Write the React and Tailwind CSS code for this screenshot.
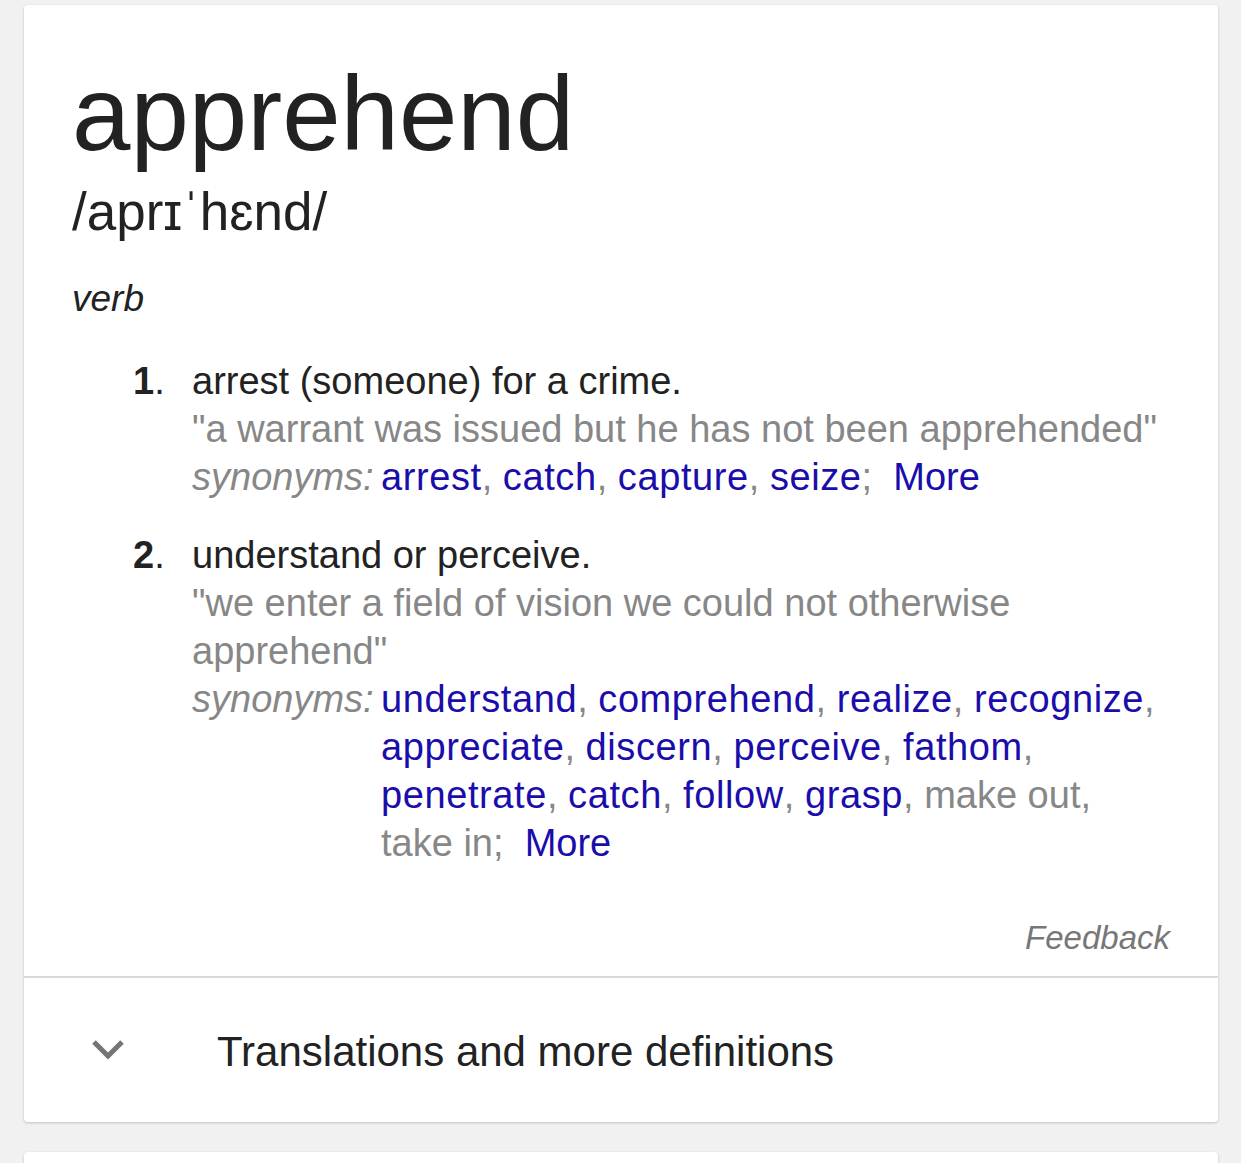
import { useState } from 'react';

const LINK = 'text-[#1a0dab] tracking-[0.6px]';

const Syn = ({ words, last }) => (
  <>
    {words.map((w, i) => (
      <span key={w}>
        <a href="#" className={LINK}>{w}</a>
        {i < words.length - 1 || !last ? <span className="text-[#878787]">, </span> : null}
      </span>
    ))}
  </>
);

const Definition = ({ n, text, example, children }) => (
  <div className="flex">
    <div className="w-[59px] shrink-0 text-[#222]">
      <span className="font-bold">{n}</span>.
    </div>
    <div className="flex-1 min-w-0">
      <div className="text-[#222]">{text}</div>
      <div className="text-[#878787]">{example}</div>
      <div className="flex">
        <span className="w-[189px] shrink-0 italic text-[#878787] whitespace-nowrap">synonyms:</span>
        <div className="flex-1 min-w-0">{children}</div>
      </div>
    </div>
  </div>
);

export default function App() {
  const [open, setOpen] = useState(false);

  return (
    <div
      className="min-h-screen bg-[#f1f1f1] pt-[5px] pr-[23px] pl-[24px] overflow-hidden"
      style={{ fontFamily: '"Liberation Sans", Arial, sans-serif' }}
    >
      <div className="bg-white rounded-[4px] shadow-[0_1px_3px_rgba(0,0,0,0.2)]">
        <div className="px-[48px] pt-[57px] pb-[18px]">
          <h1 className="text-[105px] leading-[104px] text-[#222] font-normal">apprehend</h1>
          <div className="mt-[16px] text-[53px] leading-[60px] text-[#222]">/aprɪˈhɛnd/</div>
          <div className="mt-[33px] text-[37px] leading-[48px] italic text-[#222]">verb</div>

          <div className="pl-[61px] text-[38px] leading-[48px]">
            <div className="mt-[34px]">
              <Definition
                n="1"
                text="arrest (someone) for a crime."
                example={'"a warrant was issued but he has not been apprehended"'}
              >
                <Syn words={['arrest', 'catch', 'capture', 'seize']} last />
                <span className="text-[#878787]">;&nbsp; </span>
                <a href="#" className="text-[#1a0dab]">More</a>
              </Definition>
            </div>
            <div className="mt-[30px]">
              <Definition
                n="2"
                text="understand or perceive."
                example={'"we enter a field of vision we could not otherwise apprehend"'}
              >
                <Syn
                  words={['understand', 'comprehend', 'realize', 'recognize', 'appreciate', 'discern', 'perceive', 'fathom', 'penetrate', 'catch', 'follow', 'grasp']}
                />
                <span className="text-[#878787]">make out, <span className="whitespace-nowrap">take in;</span>&nbsp; </span>
                <a href="#" className="text-[#1a0dab]">More</a>
              </Definition>
            </div>
          </div>

          <div className="mt-[51px] text-right text-[33px] leading-[40px] italic text-[#777]">
            Feedback
          </div>
        </div>

        <div className="h-[2px] bg-[#dadada]" />

        <button
          onClick={() => setOpen(!open)}
          className="w-full h-[144px] flex items-center text-left"
        >
          <svg width="34" height="22" viewBox="0 0 34 22" className="ml-[67px] shrink-0">
            <polyline points="3,3 17,17 31,3" fill="none" stroke="#757575" strokeWidth="5" />
          </svg>
          <span className="ml-[92px] text-[42px] leading-[48px] pt-[4px] text-[#222]">Translations and more definitions</span>
        </button>
      </div>

      <div className="mt-[30px] h-[40px] bg-white rounded-[4px] shadow-[0_1px_3px_rgba(0,0,0,0.2)]" />
    </div>
  );
}
